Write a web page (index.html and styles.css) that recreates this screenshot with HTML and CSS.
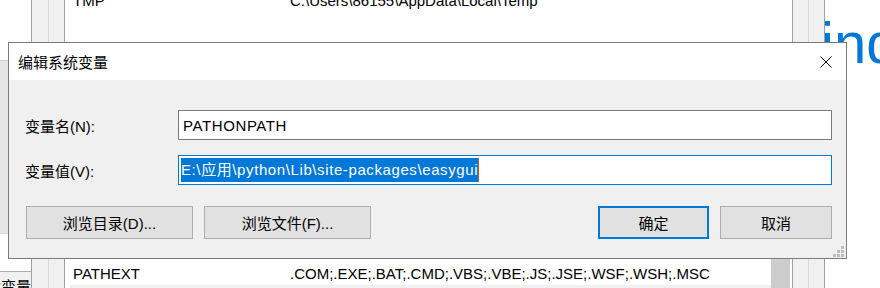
FILE: index.html
```html
<!DOCTYPE html>
<html lang="zh-CN">
<head>
    <meta charset="UTF-8">
    <title>编辑系统变量</title>
    <link rel="stylesheet" href="styles.css">
</head>
<body>
    <div class="screen">
        <div class="backdrop">
            <div class="side">
                <div class="band band-top"></div>
                <div class="band band-gray"></div>
                <div class="band band-white"></div>
                <div class="side-btn">建变量</div>
            </div>
            <div class="frame"><div class="cell"></div><div class="cell"></div></div>
            <div class="list">
                <div class="row row-cut">
                    <span class="name">TMP</span>
                    <span class="value">C:\Users\86155\AppData\Local\Temp</span>
                </div>
                <div class="filler"></div>
                <div class="row">
                    <span class="name">PATHEXT</span>
                    <span class="value">.COM;.EXE;.BAT;.CMD;.VBS;.VBE;.JS;.JSE;.WSF;.WSH;.MSC</span>
                </div>
                <div class="row-next"></div>
            </div>
            <div class="scrollbar"><div class="thumb"></div></div>
            <div class="frame frame-right"><div class="cell"></div><div class="cell"></div></div>
            <div class="brand"><span>ind</span></div>
        </div>

        <div class="dialog">
            <div class="titlebar">
                <span class="title">编辑系统变量</span>
                <span class="close">
                    <svg width="12" height="12" viewBox="0 0 12 12">
                        <path d="M0.5 0.5 L11.5 11.5 M11.5 0.5 L0.5 11.5" stroke="#000" stroke-width="1" fill="none"/>
                    </svg>
                </span>
            </div>
            <div class="content">
                <div class="field">
                    <label>变量名(N):</label>
                    <div class="input">PATHONPATH</div>
                </div>
                <div class="field">
                    <label>变量值(V):</label>
                    <div class="input active"><span class="selected">E:\应用\python\Lib\site-packages\easygui</span></div>
                </div>
                <div class="buttons">
                    <button class="btn wide">浏览目录(D)...</button>
                    <button class="btn wide">浏览文件(F)...</button>
                    <div class="push"></div>
                    <button class="btn small default">确定</button>
                    <button class="btn small">取消</button>
                </div>
            </div>
            <div class="grip">
                <i class="d1"></i>
                <i class="d2"></i><i class="d3"></i>
                <i class="d4"></i><i class="d5"></i><i class="d6"></i>
            </div>
        </div>
    </div>
</body>
</html>
```

FILE: styles.css
```css
body {
    margin: 0;
    font-family: "Liberation Sans", "Noto Sans CJK SC", sans-serif;
    font-size: 15px;
    color: #000;
}
.screen {
    position: relative;
    width: 880px;
    height: 288px;
    overflow: hidden;
    background: #fff;
}
.backdrop {
    display: flex;
    height: 288px;
}
.side {
    width: 31px;
    display: flex;
    flex-direction: column;
}
.band-top {
    height: 60px;
    border-bottom: 1px solid #d0d0d0;
}
.band-gray {
    height: 172px;
    background: #e5e5e5;
    border-bottom: 1px solid #d9d9d9;
}
.band-white {
    height: 37px;
    background: #fff;
    box-shadow: inset 0 -1px 0 #fff, inset 0 -20px 0 -19px #e6e6e6;
}
.side-btn {
    flex: 1;
    border-top: 1px solid #adadad;
    background: #f0f0f0;
    padding-top: 6px;
    white-space: nowrap;
    direction: rtl;
    text-align: left;
    overflow: hidden;
    line-height: 18px;
}
.frame {
    display: flex;
    border-left: 1px solid #a0a0a0;
    border-right: 1px solid #a0a0a0;
}
.cell {
    width: 16px;
    background: #f0f0f0;
}
.cell + .cell {
    width: 15px;
    border-left: 1px solid #d9d9d9;
}
.frame-right .cell {
    width: 15px;
}
.list {
    width: 706px;
    display: flex;
    flex-direction: column;
}
.row {
    height: 24px;
    display: flex;
    align-items: center;
    padding-left: 8px;
    white-space: nowrap;
}
.row-cut {
    margin-top: -12px;
}
.name {
    width: 217px;
}
.filler {
    flex: 1;
}
.row-next {
    height: 3px;
    margin-left: 5px;
    background: #f0f0f0;
}
.scrollbar {
    width: 21px;
    display: flex;
    flex-direction: column;
    justify-content: flex-end;
}
.thumb {
    width: 19px;
    height: 40px;
    background: #cdcdcd;
}
.brand {
    flex: 1;
    overflow: hidden;
    color: #0078d7;
    font-size: 58px;
    line-height: 58px;
    padding-top: 14px;
    white-space: nowrap;
}
.brand span {
    margin-left: -4px;
}

.dialog {
    position: absolute;
    left: 8px;
    top: 42px;
    width: 839px;
    height: 217px;
    box-sizing: border-box;
    border: 1px solid #7a7a7a;
    background: #f0f0f0;
    display: flex;
    flex-direction: column;
}
.titlebar {
    height: 37px;
    background: #fff;
    display: flex;
    align-items: center;
    justify-content: space-between;
}
.title {
    padding-left: 9px;
}
.close {
    width: 40px;
    height: 37px;
    display: flex;
    align-items: center;
    justify-content: center;
}
.close svg {
    display: block;
}
.content {
    padding: 30px 14px 0 16px;
    display: flex;
    flex-direction: column;
    gap: 15px;
}
.field {
    display: flex;
    align-items: center;
}
.field label {
    width: 153px;
}
.input {
    flex: 1;
    height: 30px;
    box-sizing: border-box;
    border: 1px solid #7a7a7a;
    background: #fff;
    padding-left: 4px;
    display: flex;
    align-items: center;
    white-space: nowrap;
    letter-spacing: 0.6px;
}
.input.active {
    border-color: #0078d7;
    padding-left: 2px;
}
.selected {
    background: #0078d7;
    color: #fff;
    height: 24px;
    line-height: 24px;
    border-right: 1px solid #c06010;
}
.buttons {
    display: flex;
    gap: 11px;
    margin-top: 6px;
    padding-left: 1px;
}
.push {
    flex: 1;
}
.btn {
    height: 33px;
    box-sizing: border-box;
    border: 1px solid #adadad;
    background: #e1e1e1;
    font-family: inherit;
    font-size: 15px;
    color: #000;
    padding: 0;
}
.btn.wide {
    width: 167px;
}
.btn.small {
    width: 112px;
}
.btn.default {
    width: 111px;
    border: 2px solid #0078d7;
}
.grip {
    position: absolute;
    right: 2px;
    bottom: 1px;
    width: 11px;
    height: 11px;
}
.grip i {
    position: absolute;
    width: 3px;
    height: 3px;
    background: #bcbcbc;
}
.grip .d1 { right: 0; top: 0; }
.grip .d2 { right: 4px; top: 4px; }
.grip .d3 { right: 0; top: 4px; }
.grip .d4 { right: 8px; top: 8px; }
.grip .d5 { right: 4px; top: 8px; }
.grip .d6 { right: 0; top: 8px; }
```
